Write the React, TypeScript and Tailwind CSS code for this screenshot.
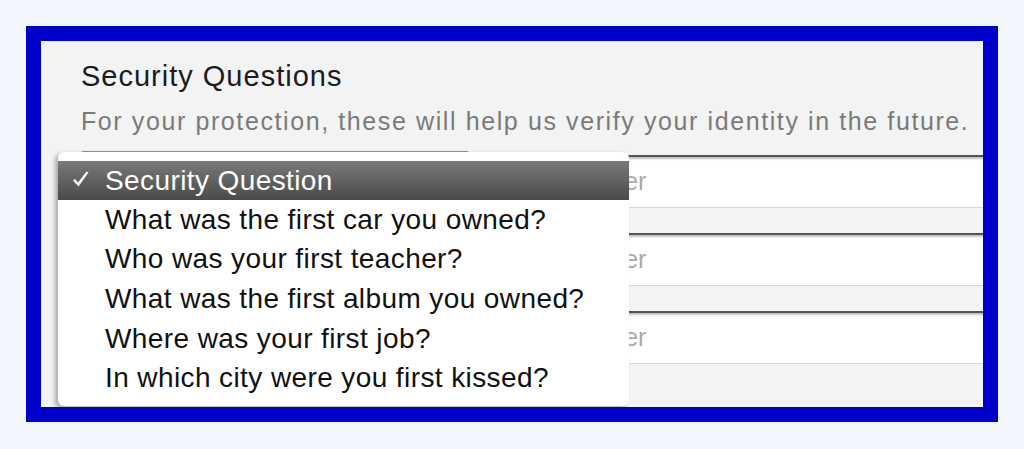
import React from "react";

const questions = [
  "What was the first car you owned?",
  "Who was your first teacher?",
  "What was the first album you owned?",
  "Where was your first job?",
  "In which city were you first kissed?",
];

function AnswerRow() {
  return (
    <div className="flex items-stretch h-[53px]">
      <div className="w-[390px] ml-[39px] -mt-[4px] rounded-[4px] bg-white shadow-[inset_0_2px_2px_rgba(0,0,0,0.45)]" />
      <div className="flex-1 ml-[75px] -mr-[10px] flex items-center pl-[18px] bg-white border-t-[2px] border-[#555] border-b border-b-[#d6d6d6] shadow-[inset_0_2px_2px_rgba(0,0,0,0.25)]">
        <span className="text-[25px] text-[#ababab]">Answer</span>
      </div>
    </div>
  );
}

export default function App() {
  return (
    <div className="w-[1024px] h-[449px] bg-[#f1f6fd] pt-[26px] pl-[26px] font-['Liberation_Sans',Arial,sans-serif]">
      <div className="w-[972px] h-[396px] border-[15px] border-[#0000cc] bg-[#f3f3f3] relative overflow-hidden">
        <div className="pl-[40px] pt-[17px]">
          <h1 className="text-[29px] leading-[36px] text-[#1c1c1c] tracking-[1px]">Security Questions</h1>
          <p className="mt-[12px] text-[25px] leading-[30px] text-[#7a7a7a] tracking-[1.6px] whitespace-nowrap">
            For your protection, these will help us verify your identity in the future.
          </p>
        </div>

        <div className="mt-[19px] flex flex-col gap-[25px]">
          <AnswerRow />
          <AnswerRow />
          <AnswerRow />
        </div>

        {/* open select menu */}
        <div className="absolute left-[17px] top-[111px] w-[571px] h-[254px] bg-white rounded-[6px] pt-[9px] shadow-[-3px_2px_4px_rgba(0,0,0,0.3)]">
          <div className="relative h-[39px] flex items-center pl-[47px] bg-gradient-to-b from-[#7a7a7a] to-[#4a4a4a] text-white text-[28px] tracking-[0.4px]">
            <svg className="absolute left-[14px] top-[10px]" width="17" height="16" viewBox="0 0 17 16">
              <path d="M1 9.5 L3 8 L6 11.5 L14.5 0.5 L16.5 1.5 L6.5 15.5 Z" fill="white" />
            </svg>
            Security Question
          </div>
          {questions.map((q) => (
            <div key={q} className="h-[39.6px] flex items-center pl-[47px] text-[28px] tracking-[0.4px] text-[#111]">
              {q}
            </div>
          ))}
        </div>
      </div>
    </div>
  );
}
